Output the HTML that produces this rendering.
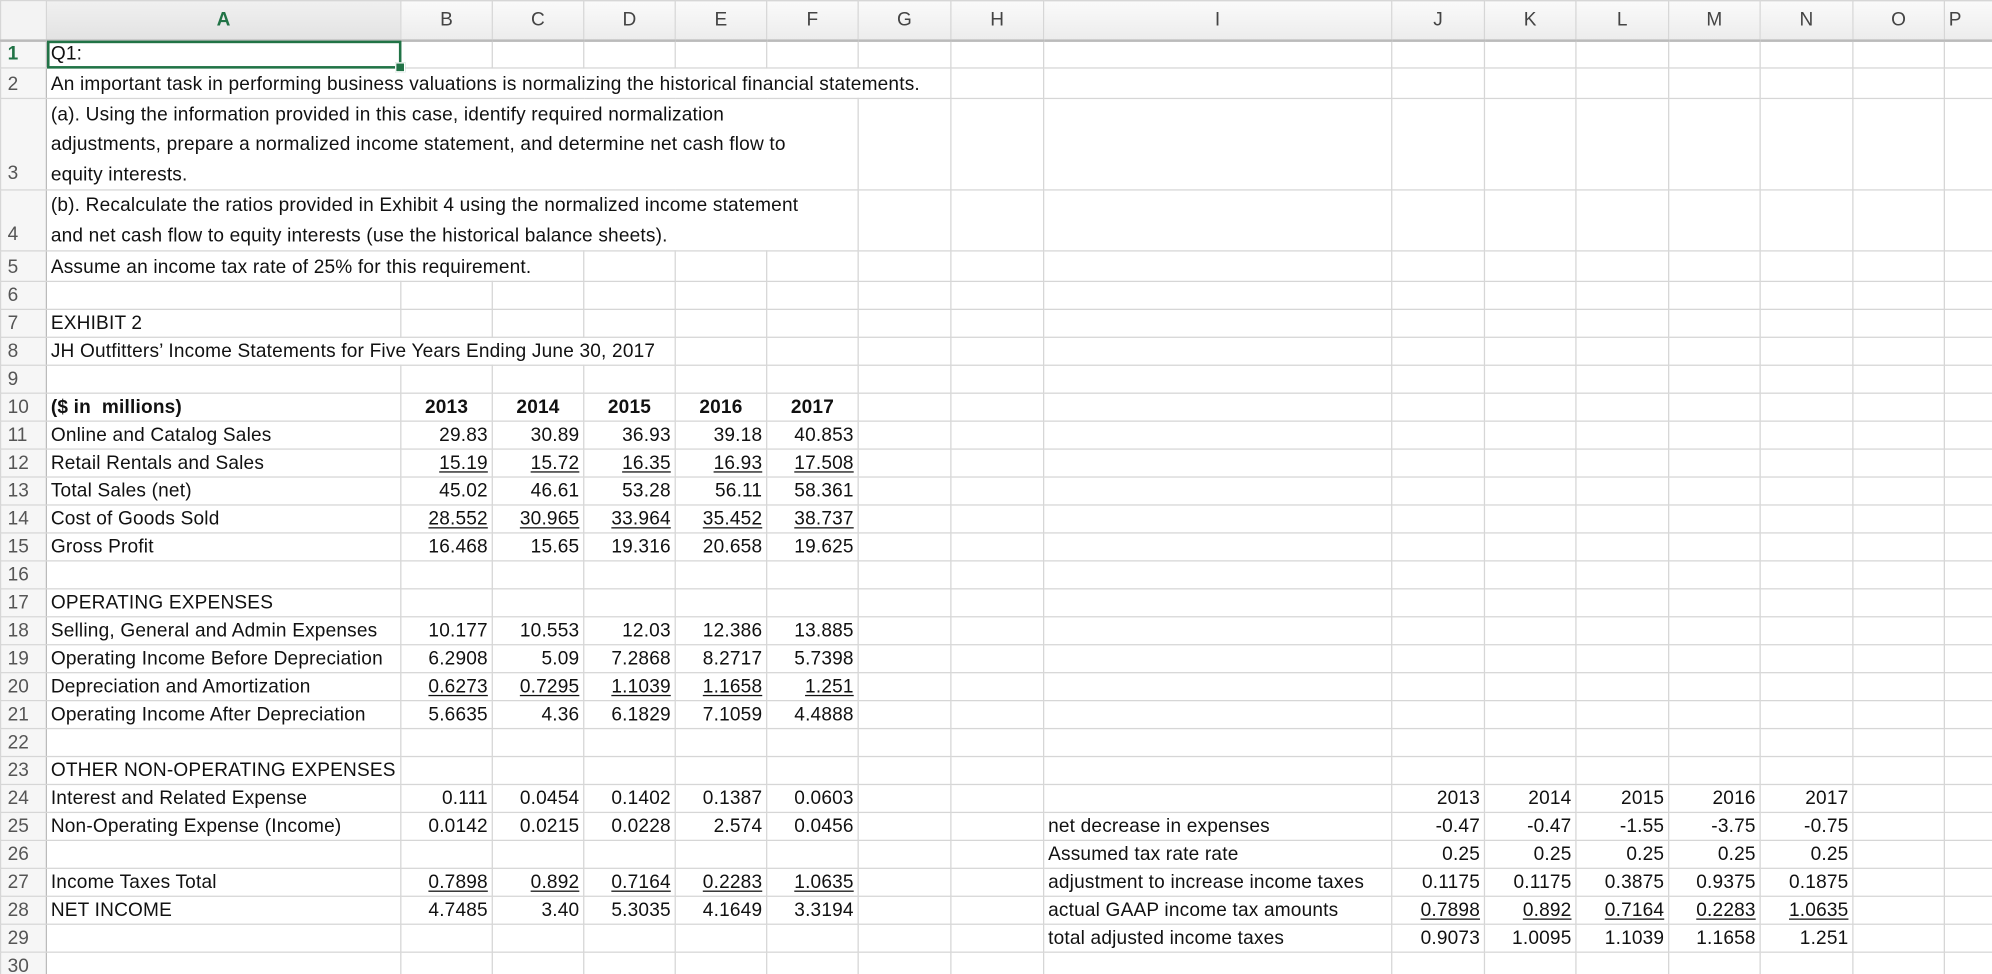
<!DOCTYPE html>
<html><head><meta charset="utf-8"><style>
html,body{margin:0;padding:0;background:#fff;overflow:hidden;width:1992px;height:974px}
#w{transform:scale(1.2704);transform-origin:0 0;width:1568px;height:767px;position:relative;font-family:"Liberation Sans",sans-serif;font-size:15px;letter-spacing:0.15px;color:#111;overflow:hidden}
table{border-collapse:collapse;table-layout:fixed;position:absolute;left:0;top:0;width:1590px}
tr{height:22px}
td{border:1px solid #d6d6d6;padding:0 3px;white-space:nowrap;overflow:hidden;vertical-align:bottom;line-height:18px;padding-bottom:1px;box-sizing:border-box}
td.n{text-align:right}
td.rn{color:#555;text-align:left;padding-left:5px;background:#f6f6f6;border-right:1px solid #bbb;font-size:15px;vertical-align:bottom;padding-bottom:1px;letter-spacing:0}
tr.h{height:31px}
tr.h td{background:linear-gradient(#fafafa,#ececec);text-align:center;color:#444;font-size:15px;border-bottom:2px solid #bbb;vertical-align:middle;padding-bottom:0}
u{text-decoration:underline;text-underline-offset:2px}
.b{font-weight:bold}
.c{text-align:center}
.wr{line-height:23.5px;padding-bottom:0}
</style></head><body><div id="w">
<table>
<colgroup><col style="width:36px"><col style="width:279px"><col style="width:72px"><col style="width:72px"><col style="width:72px"><col style="width:72px"><col style="width:72px"><col style="width:73px"><col style="width:73px"><col style="width:274px"><col style="width:73px"><col style="width:72px"><col style="width:73px"><col style="width:72px"><col style="width:73px"><col style="width:72px"><col style="width:60px"></colgroup>
<tr class="h"><td style="background:#f3f3f3"></td><td style="color:#217346;font-weight:bold;background:linear-gradient(#f0f0f0,#e2e2e2)">A</td><td>B</td><td>C</td><td>D</td><td>E</td><td>F</td><td>G</td><td>H</td><td>I</td><td>J</td><td>K</td><td>L</td><td>M</td><td>N</td><td>O</td><td style="text-align:left">P</td></tr>
<tr><td class="rn" style="color:#217346;font-weight:bold">1</td><td style="outline:2px solid #217346;outline-offset:-2px">Q1:</td><td></td><td></td><td></td><td></td><td></td><td></td><td></td><td></td><td></td><td></td><td></td><td></td><td></td><td></td><td></td></tr>
<tr style="height:24px"><td class="rn">2</td><td colspan="7">An important task in performing business valuations is normalizing the historical financial statements.</td><td></td><td></td><td></td><td></td><td></td><td></td><td></td><td></td></tr>
<tr style="height:72px"><td class="rn" style="padding-bottom:3px">3</td><td colspan="6" class="wr">(a). Using the information provided in this case, identify required normalization<br>adjustments, prepare a normalized income statement, and determine net cash flow to<br>equity interests.</td><td></td><td></td><td></td><td></td><td></td><td></td><td></td><td></td><td></td><td></td></tr>
<tr style="height:48px"><td class="rn" style="padding-bottom:3px">4</td><td colspan="6" class="wr">(b). Recalculate the ratios provided in Exhibit 4 using the normalized income statement<br>and net cash flow to equity interests (use the historical balance sheets).</td><td></td><td></td><td></td><td></td><td></td><td></td><td></td><td></td><td></td><td></td></tr>
<tr style="height:24px"><td class="rn">5</td><td colspan="3">Assume an income tax rate of 25% for this requirement.</td><td></td><td></td><td></td><td></td><td></td><td></td><td></td><td></td><td></td><td></td><td></td><td></td><td></td></tr>
<tr><td class="rn">6</td><td></td><td></td><td></td><td></td><td></td><td></td><td></td><td></td><td></td><td></td><td></td><td></td><td></td><td></td><td></td><td></td></tr>
<tr><td class="rn">7</td><td>EXHIBIT 2</td><td></td><td></td><td></td><td></td><td></td><td></td><td></td><td></td><td></td><td></td><td></td><td></td><td></td><td></td><td></td></tr>
<tr><td class="rn">8</td><td colspan="4">JH Outfitters’ Income Statements for Five Years Ending June 30, 2017</td><td></td><td></td><td></td><td></td><td></td><td></td><td></td><td></td><td></td><td></td><td></td><td></td></tr>
<tr><td class="rn">9</td><td></td><td></td><td></td><td></td><td></td><td></td><td></td><td></td><td></td><td></td><td></td><td></td><td></td><td></td><td></td><td></td></tr>
<tr><td class="rn">10</td><td class="b">($ in&nbsp; millions)</td><td class="b c">2013</td><td class="b c">2014</td><td class="b c">2015</td><td class="b c">2016</td><td class="b c">2017</td><td></td><td></td><td></td><td></td><td></td><td></td><td></td><td></td><td></td><td></td></tr>
<tr><td class="rn">11</td><td>Online and Catalog Sales</td><td class="n">29.83</td><td class="n">30.89</td><td class="n">36.93</td><td class="n">39.18</td><td class="n">40.853</td><td></td><td></td><td></td><td></td><td></td><td></td><td></td><td></td><td></td><td></td></tr>
<tr><td class="rn">12</td><td>Retail Rentals and Sales</td><td class="n"><u>15.19</u></td><td class="n"><u>15.72</u></td><td class="n"><u>16.35</u></td><td class="n"><u>16.93</u></td><td class="n"><u>17.508</u></td><td></td><td></td><td></td><td></td><td></td><td></td><td></td><td></td><td></td><td></td></tr>
<tr><td class="rn">13</td><td>Total Sales (net)</td><td class="n">45.02</td><td class="n">46.61</td><td class="n">53.28</td><td class="n">56.11</td><td class="n">58.361</td><td></td><td></td><td></td><td></td><td></td><td></td><td></td><td></td><td></td><td></td></tr>
<tr><td class="rn">14</td><td>Cost of Goods Sold</td><td class="n"><u>28.552</u></td><td class="n"><u>30.965</u></td><td class="n"><u>33.964</u></td><td class="n"><u>35.452</u></td><td class="n"><u>38.737</u></td><td></td><td></td><td></td><td></td><td></td><td></td><td></td><td></td><td></td><td></td></tr>
<tr><td class="rn">15</td><td>Gross Profit</td><td class="n">16.468</td><td class="n">15.65</td><td class="n">19.316</td><td class="n">20.658</td><td class="n">19.625</td><td></td><td></td><td></td><td></td><td></td><td></td><td></td><td></td><td></td><td></td></tr>
<tr><td class="rn">16</td><td></td><td></td><td></td><td></td><td></td><td></td><td></td><td></td><td></td><td></td><td></td><td></td><td></td><td></td><td></td><td></td></tr>
<tr><td class="rn">17</td><td>OPERATING EXPENSES</td><td></td><td></td><td></td><td></td><td></td><td></td><td></td><td></td><td></td><td></td><td></td><td></td><td></td><td></td><td></td></tr>
<tr><td class="rn">18</td><td>Selling, General and Admin Expenses</td><td class="n">10.177</td><td class="n">10.553</td><td class="n">12.03</td><td class="n">12.386</td><td class="n">13.885</td><td></td><td></td><td></td><td></td><td></td><td></td><td></td><td></td><td></td><td></td></tr>
<tr><td class="rn">19</td><td>Operating Income Before Depreciation</td><td class="n">6.2908</td><td class="n">5.09</td><td class="n">7.2868</td><td class="n">8.2717</td><td class="n">5.7398</td><td></td><td></td><td></td><td></td><td></td><td></td><td></td><td></td><td></td><td></td></tr>
<tr><td class="rn">20</td><td>Depreciation and Amortization</td><td class="n"><u>0.6273</u></td><td class="n"><u>0.7295</u></td><td class="n"><u>1.1039</u></td><td class="n"><u>1.1658</u></td><td class="n"><u>1.251</u></td><td></td><td></td><td></td><td></td><td></td><td></td><td></td><td></td><td></td><td></td></tr>
<tr><td class="rn">21</td><td>Operating Income After Depreciation</td><td class="n">5.6635</td><td class="n">4.36</td><td class="n">6.1829</td><td class="n">7.1059</td><td class="n">4.4888</td><td></td><td></td><td></td><td></td><td></td><td></td><td></td><td></td><td></td><td></td></tr>
<tr><td class="rn">22</td><td></td><td></td><td></td><td></td><td></td><td></td><td></td><td></td><td></td><td></td><td></td><td></td><td></td><td></td><td></td><td></td></tr>
<tr><td class="rn">23</td><td>OTHER NON-OPERATING EXPENSES</td><td></td><td></td><td></td><td></td><td></td><td></td><td></td><td></td><td></td><td></td><td></td><td></td><td></td><td></td><td></td></tr>
<tr><td class="rn">24</td><td>Interest and Related Expense</td><td class="n">0.111</td><td class="n">0.0454</td><td class="n">0.1402</td><td class="n">0.1387</td><td class="n">0.0603</td><td></td><td></td><td></td><td class="n">2013</td><td class="n">2014</td><td class="n">2015</td><td class="n">2016</td><td class="n">2017</td><td></td><td></td></tr>
<tr><td class="rn">25</td><td>Non-Operating Expense (Income)</td><td class="n">0.0142</td><td class="n">0.0215</td><td class="n">0.0228</td><td class="n">2.574</td><td class="n">0.0456</td><td></td><td></td><td>net decrease in expenses</td><td class="n">-0.47</td><td class="n">-0.47</td><td class="n">-1.55</td><td class="n">-3.75</td><td class="n">-0.75</td><td></td><td></td></tr>
<tr><td class="rn">26</td><td></td><td></td><td></td><td></td><td></td><td></td><td></td><td></td><td>Assumed tax rate rate</td><td class="n">0.25</td><td class="n">0.25</td><td class="n">0.25</td><td class="n">0.25</td><td class="n">0.25</td><td></td><td></td></tr>
<tr><td class="rn">27</td><td>Income Taxes Total</td><td class="n"><u>0.7898</u></td><td class="n"><u>0.892</u></td><td class="n"><u>0.7164</u></td><td class="n"><u>0.2283</u></td><td class="n"><u>1.0635</u></td><td></td><td></td><td>adjustment to increase income taxes</td><td class="n">0.1175</td><td class="n">0.1175</td><td class="n">0.3875</td><td class="n">0.9375</td><td class="n">0.1875</td><td></td><td></td></tr>
<tr><td class="rn">28</td><td>NET INCOME</td><td class="n">4.7485</td><td class="n">3.40</td><td class="n">5.3035</td><td class="n">4.1649</td><td class="n">3.3194</td><td></td><td></td><td>actual GAAP income tax amounts</td><td class="n"><u>0.7898</u></td><td class="n"><u>0.892</u></td><td class="n"><u>0.7164</u></td><td class="n"><u>0.2283</u></td><td class="n"><u>1.0635</u></td><td></td><td></td></tr>
<tr><td class="rn">29</td><td></td><td></td><td></td><td></td><td></td><td></td><td></td><td></td><td>total adjusted income taxes</td><td class="n">0.9073</td><td class="n">1.0095</td><td class="n">1.1039</td><td class="n">1.1658</td><td class="n">1.251</td><td></td><td></td></tr>
<tr><td class="rn">30</td><td></td><td></td><td></td><td></td><td></td><td></td><td></td><td></td><td></td><td></td><td></td><td></td><td></td><td></td><td></td><td></td></tr>
</table>
<div style="position:absolute;left:311px;top:49px;width:6px;height:6px;background:#217346;border:1px solid #fff"></div>
</div></body></html>
